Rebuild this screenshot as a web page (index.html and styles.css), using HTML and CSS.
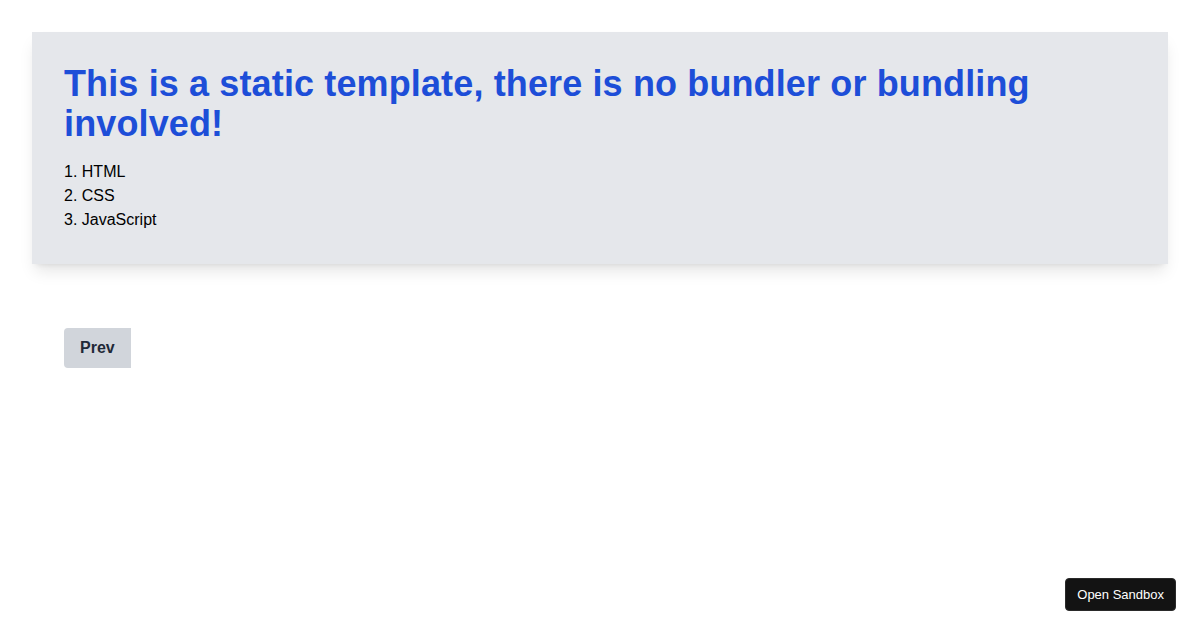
FILE: index.html
```html
<!DOCTYPE html>
<html lang="en">
<head>
<meta charset="utf-8">
<title>Static Template</title>
<link rel="stylesheet" href="styles.css">
</head>
<body>
<main class="page">
  <section class="card">
    <h1 class="title">This is a static template, there is no bundler or bundling involved!</h1>
    <ol class="list">
      <li>HTML</li>
      <li>CSS</li>
      <li>JavaScript</li>
    </ol>
  </section>
  <nav class="pager">
    <button class="btn-prev" type="button">Prev</button>
  </nav>
</main>
<a class="sandbox-btn" href="#">Open Sandbox</a>
</body>
</html>
```
FILE: styles.css
```css
* { box-sizing: border-box; }
html, body { margin: 0; padding: 0; background: #ffffff; }
body {
  font-family: "Liberation Sans", Arial, Helvetica, sans-serif;
  color: #000;
  font-size: 16px;
  line-height: 24px;
}
.page {
  padding: 32px;
}
.card {
  background: #e5e7eb;
  padding: 32px;
  box-shadow: 0 10px 15px -3px rgba(0,0,0,0.1), 0 4px 6px -4px rgba(0,0,0,0.1);
}
.title {
  margin: 0;
  font-size: 36px;
  line-height: 40px;
  font-weight: 700;
  letter-spacing: 0.13px;
  color: #1d4ed8;
}
.list {
  margin: 16px 0 0 0;
  padding: 0;
  list-style: decimal inside;
}
.list li { line-height: 24px; }
.pager {
  display: flex;
  margin-top: 64px;
  padding: 0 32px;
}
.btn-prev {
  font-family: inherit;
  font-size: 16px;
  line-height: 24px;
  font-weight: 700;
  color: #1f2937;
  background: #d1d5db;
  border: 0;
  padding: 8px 16px;
  border-radius: 4px 0 0 4px;
  cursor: pointer;
}
.sandbox-btn {
  position: fixed;
  right: 24px;
  bottom: 19px;
  background: #131313;
  color: #ffffff;
  font-family: "Liberation Sans", Arial, Helvetica, sans-serif;
  font-size: 13px;
  line-height: 15px;
  padding: 8px 11px;
  border-radius: 4px;
  border: 1px solid #2a2a2a;
  text-decoration: none;
}
```
